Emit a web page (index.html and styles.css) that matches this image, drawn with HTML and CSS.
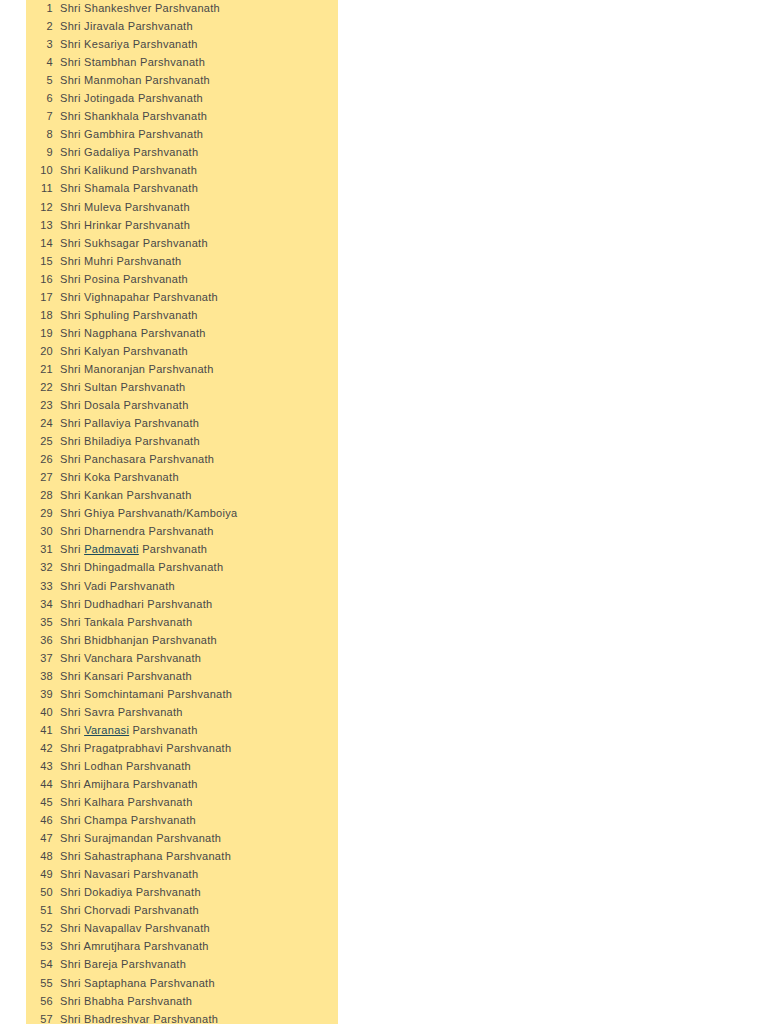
FILE: index.html
```html
<!DOCTYPE html>
<html>
<head>
<meta charset="utf-8">
<link rel="stylesheet" href="styles.css">
</head>
<body>
<div class="panel">
<ol class="list">
<li><span class="num">1</span><span class="name">Shri Shankeshver Parshvanath</span></li>
<li><span class="num">2</span><span class="name">Shri Jiravala Parshvanath</span></li>
<li><span class="num">3</span><span class="name">Shri Kesariya Parshvanath</span></li>
<li><span class="num">4</span><span class="name">Shri Stambhan Parshvanath</span></li>
<li><span class="num">5</span><span class="name">Shri Manmohan Parshvanath</span></li>
<li><span class="num">6</span><span class="name">Shri Jotingada Parshvanath</span></li>
<li><span class="num">7</span><span class="name">Shri Shankhala Parshvanath</span></li>
<li><span class="num">8</span><span class="name">Shri Gambhira Parshvanath</span></li>
<li><span class="num">9</span><span class="name">Shri Gadaliya Parshvanath</span></li>
<li><span class="num">10</span><span class="name">Shri Kalikund Parshvanath</span></li>
<li><span class="num">11</span><span class="name">Shri Shamala Parshvanath</span></li>
<li><span class="num">12</span><span class="name">Shri Muleva Parshvanath</span></li>
<li><span class="num">13</span><span class="name">Shri Hrinkar Parshvanath</span></li>
<li><span class="num">14</span><span class="name">Shri Sukhsagar Parshvanath</span></li>
<li><span class="num">15</span><span class="name">Shri Muhri Parshvanath</span></li>
<li><span class="num">16</span><span class="name">Shri Posina Parshvanath</span></li>
<li><span class="num">17</span><span class="name">Shri Vighnapahar Parshvanath</span></li>
<li><span class="num">18</span><span class="name">Shri Sphuling Parshvanath</span></li>
<li><span class="num">19</span><span class="name">Shri Nagphana Parshvanath</span></li>
<li><span class="num">20</span><span class="name">Shri Kalyan Parshvanath</span></li>
<li><span class="num">21</span><span class="name">Shri Manoranjan Parshvanath</span></li>
<li><span class="num">22</span><span class="name">Shri Sultan Parshvanath</span></li>
<li><span class="num">23</span><span class="name">Shri Dosala Parshvanath</span></li>
<li><span class="num">24</span><span class="name">Shri Pallaviya Parshvanath</span></li>
<li><span class="num">25</span><span class="name">Shri Bhiladiya Parshvanath</span></li>
<li><span class="num">26</span><span class="name">Shri Panchasara Parshvanath</span></li>
<li><span class="num">27</span><span class="name">Shri Koka Parshvanath</span></li>
<li><span class="num">28</span><span class="name">Shri Kankan Parshvanath</span></li>
<li><span class="num">29</span><span class="name">Shri Ghiya Parshvanath/Kamboiya</span></li>
<li><span class="num">30</span><span class="name">Shri Dharnendra Parshvanath</span></li>
<li><span class="num">31</span><span class="name">Shri <a class="link" href="#">Padmavati</a> Parshvanath</span></li>
<li><span class="num">32</span><span class="name">Shri Dhingadmalla Parshvanath</span></li>
<li><span class="num">33</span><span class="name">Shri Vadi Parshvanath</span></li>
<li><span class="num">34</span><span class="name">Shri Dudhadhari Parshvanath</span></li>
<li><span class="num">35</span><span class="name">Shri Tankala Parshvanath</span></li>
<li><span class="num">36</span><span class="name">Shri Bhidbhanjan Parshvanath</span></li>
<li><span class="num">37</span><span class="name">Shri Vanchara Parshvanath</span></li>
<li><span class="num">38</span><span class="name">Shri Kansari Parshvanath</span></li>
<li><span class="num">39</span><span class="name">Shri Somchintamani Parshvanath</span></li>
<li><span class="num">40</span><span class="name">Shri Savra Parshvanath</span></li>
<li><span class="num">41</span><span class="name">Shri <a class="link" href="#">Varanasi</a> Parshvanath</span></li>
<li><span class="num">42</span><span class="name">Shri Pragatprabhavi Parshvanath</span></li>
<li><span class="num">43</span><span class="name">Shri Lodhan Parshvanath</span></li>
<li><span class="num">44</span><span class="name">Shri Amijhara Parshvanath</span></li>
<li><span class="num">45</span><span class="name">Shri Kalhara Parshvanath</span></li>
<li><span class="num">46</span><span class="name">Shri Champa Parshvanath</span></li>
<li><span class="num">47</span><span class="name">Shri Surajmandan Parshvanath</span></li>
<li><span class="num">48</span><span class="name">Shri Sahastraphana Parshvanath</span></li>
<li><span class="num">49</span><span class="name">Shri Navasari Parshvanath</span></li>
<li><span class="num">50</span><span class="name">Shri Dokadiya Parshvanath</span></li>
<li><span class="num">51</span><span class="name">Shri Chorvadi Parshvanath</span></li>
<li><span class="num">52</span><span class="name">Shri Navapallav Parshvanath</span></li>
<li><span class="num">53</span><span class="name">Shri Amrutjhara Parshvanath</span></li>
<li><span class="num">54</span><span class="name">Shri Bareja Parshvanath</span></li>
<li><span class="num">55</span><span class="name">Shri Saptaphana Parshvanath</span></li>
<li><span class="num">56</span><span class="name">Shri Bhabha Parshvanath</span></li>
<li><span class="num">57</span><span class="name">Shri Bhadreshvar Parshvanath</span></li>
</ol>
</div>
</body>
</html>
```

FILE: styles.css
```css
html, body {
  margin: 0;
  padding: 0;
  background: #ffffff;
  height: 1024px;
  overflow: hidden;
}
.panel {
  margin-left: 26px;
  width: 312px;
  min-height: 1030px;
  background: #ffe794;
  margin-top: -1px;
}
.list {
  list-style: none;
  margin: 0;
  padding: 0;
  font-family: "Liberation Sans", Arial, sans-serif;
  font-size: 11px;
  letter-spacing: 0.3px;
  color: #484848;
}
.list li {
  display: grid;
  grid-template-columns: 27px auto;
  column-gap: 7px;
  height: 18.05px;
  line-height: 18.05px;
  white-space: nowrap;
}
.num {
  text-align: right;
}
.link {
  color: #1c4a5c;
  text-decoration: underline;
}
```
